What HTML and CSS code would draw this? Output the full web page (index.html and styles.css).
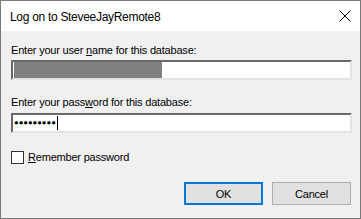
FILE: index.html
```html
<!DOCTYPE html>
<html>
<head>
<meta charset="utf-8">
<link rel="stylesheet" href="styles.css">
</head>
<body>
<div class="window">
  <div class="titlebar">
    <span class="title">Log on to SteveeJayRemote8</span>
    <svg class="close" width="12" height="12" viewBox="0 0 12 12"><path d="M0.5 0.5 L11.5 11.5 M11.5 0.5 L0.5 11.5" stroke="#000" stroke-width="1" fill="none"/></svg>
  </div>
  <div class="content">
    <div class="label l1">Enter your user <u>n</u>ame for this database:</div>
    <div class="field"><div class="redact"></div></div>
    <div class="label l2">Enter your pass<u>w</u>ord for this database:</div>
    <div class="field"><span class="dots">●●●●●●●●●</span><span class="caret"></span></div>
    <div class="check-row">
      <span class="checkbox"></span>
      <span class="check-label"><u>R</u>emember password</span>
    </div>
    <div class="buttons">
      <div class="btn btn-ok">OK</div>
      <div class="btn">Cancel</div>
    </div>
  </div>
</div>
</body>
</html>
```
FILE: styles.css
```css
html, body { margin: 0; padding: 0; background: #f0f0f0; }
.window {
  width: 361px; height: 219px; box-sizing: border-box;
  border: 1px solid #7a7a7a;
  background: #f0f0f0;
  font-family: "Liberation Sans", Arial, sans-serif;
  font-size: 11px; color: #000; letter-spacing: -0.2px;
  display: flex; flex-direction: column;
}
.titlebar {
  height: 30px; background: #fff;
  display: flex; align-items: center; justify-content: space-between;
  padding: 0 9px 0 9px;
}
.title { font-size: 12px; color: #000; margin-top: 1px; letter-spacing: -0.3px; }
.close { width: 12px; height: 12px; }
.content {
  padding: 0 8px 0 10px;
  display: flex; flex-direction: column;
}
.label { line-height: 13px; height: 13px; }
.l1 { margin-top: 13px; margin-bottom: 3px; }
.l2 { margin-top: 16px; margin-bottom: 4px; }
.label u, .check-label u { text-decoration: underline; text-underline-offset: 1px; }
.field {
  height: 20px; box-sizing: border-box; background: #fff;
  border-style: solid; border-width: 2px;
  border-color: #696969 #e3e3e3 #e3e3e3 #696969;
  display: flex; align-items: center; padding-left: 1px;
}
.redact { width: 148px; height: 16px; background: #808080; }
.dots { font-family: "Liberation Sans", sans-serif; font-size: 7.7px; letter-spacing: 0; line-height: 14px; color: #000; }
.caret { width: 1px; height: 14px; background: #000; margin-left: 1px; }
.check-row { display: flex; align-items: center; margin-top: 18px; height: 13px; }
.checkbox {
  width: 13px; height: 13px; box-sizing: border-box;
  border: 1px solid #333; background: #fff; margin-right: 4px;
}
.check-label { line-height: 13px; }
.buttons {
  display: flex; justify-content: flex-end; gap: 9px;
  margin-top: 18px; padding-right: 1px;
}
.btn {
  width: 79px; height: 23px; box-sizing: border-box;
  border: 1px solid #adadad; background: #e1e1e1;
  display: flex; align-items: center; justify-content: center;
}
.btn-ok { border: 2px solid #0078d7; }
```
